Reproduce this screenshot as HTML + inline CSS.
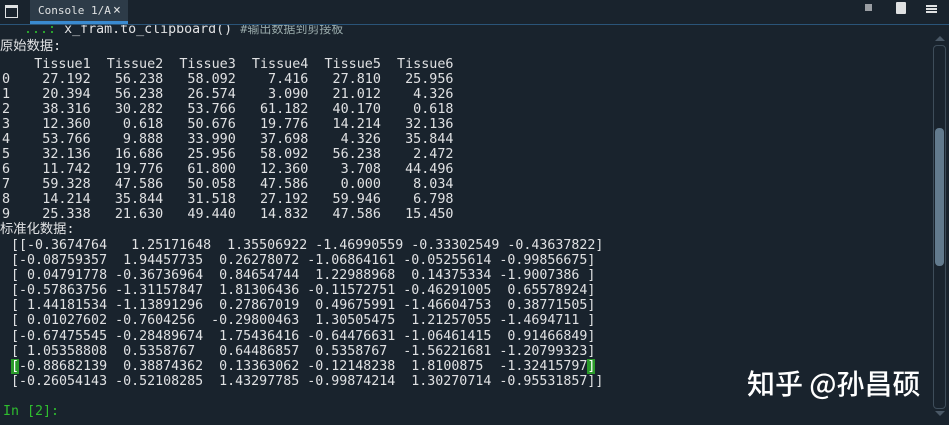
<!DOCTYPE html>
<html><head><meta charset="utf-8"><style>
body{margin:0;width:949px;height:425px;background:#19232d;overflow:hidden;position:relative;font-family:"DejaVu Sans Mono","Liberation Mono","Noto Sans CJK SC",monospace;}
.top{position:absolute;left:0;top:0;width:949px;height:25px;background:#19232d;z-index:2}
.sep{position:absolute;left:0;top:24px;width:949px;height:1px;background:#2a5478;z-index:3}
.tab{position:absolute;left:30px;top:0;width:98px;height:25px;background:#2d3b48;overflow:visible}
.tab .u{position:absolute;left:0;bottom:1px;width:100%;height:3px;background:#3a8ad0}
.tab span{position:absolute;left:8px;top:4px;font-size:11px;color:#dfe1e2;font-family:"DejaVu Sans Mono",monospace;white-space:nowrap}
.l{position:absolute;left:3px;font-size:13.3px;line-height:15px;color:#e0e1e3;white-space:pre}
.cjk{font-family:"DejaVu Sans Mono","Noto Sans CJK SC",monospace}
.g{color:#2fbd2f}
.hl{background:#2a9a2a;color:#fff}
.sb{position:absolute;left:933px;top:45px;width:11px;height:362px;border:1px solid #3e4d5a;border-radius:4px}
.th{position:absolute;left:935px;top:128px;width:9px;height:138px;background:#627a8d;border-radius:4px}
.wm{position:absolute;left:747px;top:363px;font-family:"Noto Sans CJK SC",sans-serif;font-size:28px;color:#fff;font-weight:500}
</style></head><body>
<div class="top">
<div style="position:absolute;left:5px;top:5px;width:11px;height:9px;border:1.5px solid #dfe1e2;border-top-width:3px"></div>
<div class="tab"><span>Console 1/A</span><span style="left:83px;top:3px;font-size:13px">×</span><div class="u"></div></div>
<div style="position:absolute;left:865px;top:4px;width:7px;height:7px;background:#9a9ea3"></div>
<div style="position:absolute;left:896px;top:2px;width:10px;height:12px;background:#dfe1e2;border-radius:1px"></div>
<div style="position:absolute;left:926px;top:5px;width:11px;height:1.5px;background:#dfe1e2;box-shadow:0 3px 0 #dfe1e2,0 6px 0 #dfe1e2"></div>
</div>
<div class="sep"></div>
<div class="l cjk" style="top:22px;left:0">   <span class="g">...:</span> x_fram.to_clipboard() <span style="color:#9aa;font-size:12px">#输出数据到剪接板</span></div>
<div class="l cjk" style="top:39px;left:0">原始数据:</div>
<div class="l" style="top:57px;left:2px;font-size:13.4px">    Tissue1  Tissue2  Tissue3  Tissue4  Tissue5  Tissue6
0    27.192   56.238   58.092    7.416   27.810   25.956
1    20.394   56.238   26.574    3.090   21.012    4.326
2    38.316   30.282   53.766   61.182   40.170    0.618
3    12.360    0.618   50.676   19.776   14.214   32.136
4    53.766    9.888   33.990   37.698    4.326   35.844
5    32.136   16.686   25.956   58.092   56.238    2.472
6    11.742   19.776   61.800   12.360    3.708   44.496
7    59.328   47.586   50.058   47.586    0.000    8.034
8    14.214   35.844   31.518   27.192   59.946    6.798
9    25.338   21.630   49.440   14.832   47.586   15.450</div>
<div class="l cjk" style="top:222px;left:0">标准化数据:</div>
<div class="l" style="top:238px;line-height:15.1px"> [[-0.3674764   1.25171648  1.35506922 -1.46990559 -0.33302549 -0.43637822]
 [-0.08759357  1.94457735  0.26278072 -1.06864161 -0.05255614 -0.99856675]
 [ 0.04791778 -0.36736964  0.84654744  1.22988968  0.14375334 -1.9007386 ]
 [-0.57863756 -1.31157847  1.81306436 -0.11572751 -0.46291005  0.65578924]
 [ 1.44181534 -1.13891296  0.27867019  0.49675991 -1.46604753  0.38771505]
 [ 0.01027602 -0.7604256  -0.29800463  1.30505475  1.21257055 -1.4694711 ]
 [-0.67475545 -0.28489674  1.75436416 -0.64476631 -1.06461415  0.91466849]
 [ 1.05358808  0.5358767   0.64486857  0.5358767  -1.56221681 -1.20799323]
 <span class="hl">[</span>-0.88682139  0.38874362  0.13363062 -0.12148238  1.8100875  -1.32415797<span class="hl">]</span>
 [-0.26054143 -0.52108285  1.43297785 -0.99874214  1.30270714 -0.95531857]]</div>
<div class="l g" style="top:404px;left:3px">In [2]:</div>
<div class="sb"></div><div class="th"></div>
<div style="position:absolute;left:935px;top:36px;border:5px solid transparent;border-bottom-color:#4a5866;border-top:0"></div>
<div style="position:absolute;left:935px;top:411px;border:5px solid transparent;border-top-color:#4a5866;border-bottom:0"></div>
<div class="wm">知乎 @孙昌硕</div>
</body></html>
